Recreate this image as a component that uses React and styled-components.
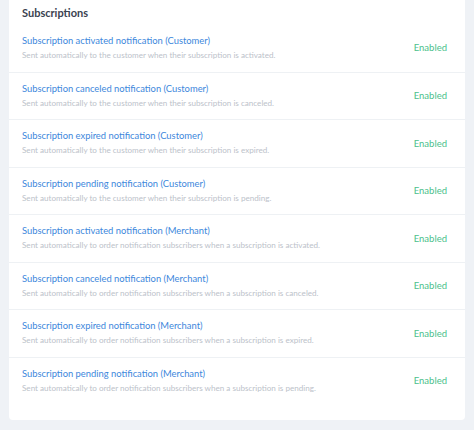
import React from 'react';
import styled, { createGlobalStyle } from 'styled-components';

const GlobalStyle = createGlobalStyle`
  html, body {
    margin: 0;
    padding: 0;
    background: #eff2f6;
    font-family: Lato, "Noto Sans", sans-serif;
  }
`;

const Page = styled.div`
  padding: 0 9px 11px;
`;

const Card = styled.section`
  background: #ffffff;
  border-radius: 0 0 4px 4px;
  padding-bottom: 16px;
`;

const Header = styled.h2`
  margin: 0;
  padding: 5px 13px 0;
  height: 19px;
  font-size: 11px;
  font-weight: 700;
  color: #3a4250;
  line-height: 16px;
`;

const Row = styled.div`
  display: flex;
  align-items: center;
  justify-content: space-between;
  height: 47.5px;
  box-sizing: border-box;
  padding: 0 18px 0 13px;
  border-top: ${p => (p.$first ? 'none' : '1px solid #eef1f4')};
`;

const Info = styled.div`
  display: flex;
  flex-direction: column;
  gap: 3px;
  margin-top: -1px;
`;

const Title = styled.a`
  font-size: 9.4px;
  color: #3d87dc;
  text-decoration: none;
  line-height: 13px;
`;

const Desc = styled.span`
  font-size: 8.1px;
  color: #bcc2ca;
  line-height: 11px;
`;

const Status = styled.span`
  font-size: 9.5px;
  color: #4bbf8b;
`;

const rows = [
  ['Subscription activated notification (Customer)', 'Sent automatically to the customer when their subscription is activated.'],
  ['Subscription canceled notification (Customer)', 'Sent automatically to the customer when their subscription is canceled.'],
  ['Subscription expired notification (Customer)', 'Sent automatically to the customer when their subscription is expired.'],
  ['Subscription pending notification (Customer)', 'Sent automatically to the customer when their subscription is pending.'],
  ['Subscription activated notification (Merchant)', 'Sent automatically to order notification subscribers when a subscription is activated.'],
  ['Subscription canceled notification (Merchant)', 'Sent automatically to order notification subscribers when a subscription is canceled.'],
  ['Subscription expired notification (Merchant)', 'Sent automatically to order notification subscribers when a subscription is expired.'],
  ['Subscription pending notification (Merchant)', 'Sent automatically to order notification subscribers when a subscription is pending.'],
];

export default function App() {
  return (
    <>
      <GlobalStyle />
      <Page>
        <Card>
          <Header>Subscriptions</Header>
          {rows.map(([title, desc], i) => (
            <Row key={title} $first={i === 0}>
              <Info>
                <Title href="#">{title}</Title>
                <Desc>{desc}</Desc>
              </Info>
              <Status>Enabled</Status>
            </Row>
          ))}
        </Card>
      </Page>
    </>
  );
}
